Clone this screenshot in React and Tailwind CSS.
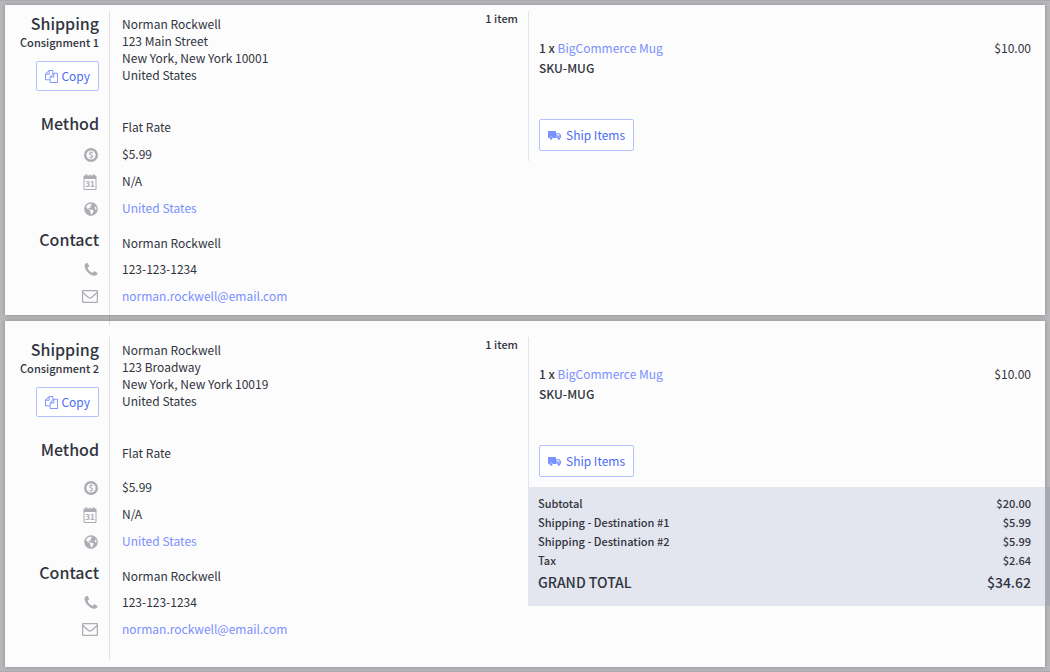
import React from "react";
import { FaGlobeAmericas } from "react-icons/fa";

function CopyIcon() {
  return (
    <svg viewBox="0 0 1792 1792" className="size-[13px] shrink-0 fill-[#8296ff]" aria-hidden="true">
      <path d="M1696 384q40 0 68 28t28 68v1216q0 40-28 68t-68 28h-960q-40 0-68-28t-28-68v-288h-544q-40 0-68-28t-28-68v-672q0-40 20-88t48-76l408-408q28-28 76-48t88-20h416q40 0 68 28t28 68v328q68-40 128-40h416zm-544 213l-299 299h299v-299zm-640-384l-299 299h299v-299zm196 647l316-316v-416h-384v416q0 40-28 68t-68 28h-416v640h512v-256q0-40 20-88t48-76zm956 804v-1152h-384v416q0 40-28 68t-68 28h-416v640h896z" />
    </svg>
  );
}

function TruckIcon() {
  return (
    <svg viewBox="0 0 13 9" className="h-[9px] w-[13px] shrink-0 fill-[#7b91ff]" aria-hidden="true">
      <path d="M0 .6Q0 0 .6 0H7.4Q8 0 8 .6V7H4.6a1.5 1.5 0 0 0-3 0H.6Q0 7 0 6.4Z" />
      <path fillRule="evenodd" d="M8.3 2h2.5q.4 0 .7.3l1.2 1.5q.3.3.3.7V7h-.6a1.5 1.5 0 0 0-3 0H8.3ZM9.3 2.8v1.7h2.6l-1.2-1.7Z" />
      <circle cx="3.1" cy="7.4" r="1.3" />
      <circle cx="10.9" cy="7.4" r="1.3" />
    </svg>
  );
}

function CoinIcon() {
  return (
    <svg viewBox="0 0 14 14" className="size-[14px]" aria-hidden="true">
      <circle cx="7" cy="7" r="5.8" fill="none" stroke="currentColor" strokeWidth="2.4" />
      <text x="7" y="10" textAnchor="middle" fontSize="8" fontWeight="700" fill="currentColor">$</text>
    </svg>
  );
}

function CalendarIcon() {
  return (
    <svg viewBox="0 0 14 16" className="mr-px h-4 w-[14px]" aria-hidden="true">
      <path fill="currentColor" fillRule="evenodd" d="M1.5 1.5H2.600V.3H4.200V1.500H6.200V.8H7.800V1.500H9.800V.3H11.400V1.500H12.500Q13.500 1.500 13.500 2.500V15Q13.500 16 12.500 16H1.500Q.5 16 .5 15V2.500Q.5 1.500 1.500 1.500ZM1.500 5V15H12.500V5Z" />
      <text x="7" y="13" textAnchor="middle" fontSize="8" fontWeight="700" fill="currentColor">31</text>
    </svg>
  );
}

function PhoneIcon() {
  return (
    <svg viewBox="128 128 1536 1536" className="size-[14px] fill-current" aria-hidden="true">
      <path d="M1600 1240q0 27-10 70.5t-21 68.5q-21 50-122 106-94 51-186 51-27 0-53-3.5t-57.5-12.5-47-14.5-55.5-20.5-49-18q-98-35-175-83-127-79-264-216t-216-264q-48-77-83-175-3-9-18-49t-20.5-55.5-14.5-47-12.5-57.5-3.500-53q0-92 51-186 56-101 106-122 25-11 68.500-21t70.500-10q14 0 21 3 18 6 53 76 11 19 30 54t35 63.500 31 53.500q3 4 17.500 25t21.500 35.500 7 28.500q0 20-28.500 50t-62 55-62 53-28.500 46q0 9 5 22.500t8.500 20.500 14 24 11.500 19q76 137 174 235t235 174q2 1 19 11.500t24 14 20.500 8.500 22.500 5q18 0 46-28.500t53-62 55-62 50-28.500q14 0 28.500 7t35.500 21.500 25 17.500q25 15 53.500 31t63.500 35 54 30q70 35 76 53 3 7 3 21z" />
    </svg>
  );
}

function MailIcon() {
  return (
    <svg viewBox="0 0 16 13" className="h-[13px] w-4" fill="none" stroke="currentColor" strokeWidth="1.3" aria-hidden="true">
      <rect x=".6" y=".6" width="14.800" height="11.800" rx=".8" />
      <path d="M.8 2.400 6.500 7.400Q8 8.600 9.500 7.400L15.200 2.400" />
    </svg>
  );
}

function Row({ label, labelClass = "pr-[10px]", className = "", children }) {
  return (
    <div className={"flex " + className}>
      <div className={"flex w-[105px] shrink-0 justify-end border-r border-black/10 " + labelClass}>
        {label}
      </div>
      <div className="min-w-0 flex-1 pl-3">{children}</div>
    </div>
  );
}

function Detail({ icon, children }) {
  return (
    <Row className="h-[27px] leading-[25px]" labelClass="items-center pr-[11px] text-[#acacb3]" label={icon}>
      {children}
    </Row>
  );
}

function Heading({ children }) {
  return <h2 className="text-[16px] leading-6 font-medium">{children}</h2>;
}

function ActionButton({ icon, className, children }) {
  return (
    <button type="button" className={"flex items-center rounded-xs border border-[#b3c1ff] bg-white px-2 text-[12px] text-[#4b6bf5] " + className}>
      {icon}
      {children}
    </button>
  );
}

function Consignment({ number, street, city, methodClass, className = "", tailClass, totals }) {
  return (
    <section className={"grid grid-cols-[523fr_517fr] bg-[#fcfcfc] shadow-[0_0_4px_rgba(0,0,0,0.25)] " + className}>
      <div>
        <Row
          className="h-[99px]"
          labelClass="flex-col items-end justify-start! pr-[10px]"
          label={
            <>
              <Heading>Shipping</Heading>
              <h3 className="text-[11px] leading-[15px] font-medium">Consignment {number}</h3>
              <ActionButton icon={<CopyIcon />} className="mt-[11px] h-[30px] gap-[3px]">Copy</ActionButton>
            </>
          }
        >
          <div className="flex justify-between pr-[10px]">
            <address className="pt-1 leading-[17px] not-italic">
              Norman Rockwell<br />
              {street}<br />
              {city}<br />
              United States
            </address>
            <p className="text-[11px] leading-[15px] font-medium">1 item</p>
          </div>
        </Row>
        <Row className={methodClass} labelClass="pt-px pr-[10px]" label={<Heading>Method</Heading>}>
          <p className="pt-[7px] leading-5">Flat Rate</p>
        </Row>
        <Detail icon={<CoinIcon />}>$5.99</Detail>
        <Detail icon={<CalendarIcon />}>N/A</Detail>
        <Detail icon={<FaGlobeAmericas className="size-[14px]" />}>
          <a href="#country" className="text-[#7b8fff]">United States</a>
        </Detail>
        <Row className="h-[34px]" labelClass="pt-[5px] pr-[10px]" label={<Heading>Contact</Heading>}>
          <p className="pt-[11px] leading-5">Norman Rockwell</p>
        </Row>
        <Detail icon={<PhoneIcon />}>123-123-1234</Detail>
        <Detail icon={<MailIcon />}>
          <a href="mailto:norman.rockwell@email.com" className="text-[#7b8fff]">norman.rockwell@email.com</a>
        </Detail>
        <Row className={tailClass} />
      </div>
      <div>
        <div className="h-[150px] border-l border-[#e1e4f0] pt-[27px] pr-[14px] pl-[10px]">
          <div className="flex justify-between leading-5">
            <p><span className="font-medium">1 x</span> <a href="#mug" className="text-[#7b8fff]">BigCommerce Mug</a></p>
            <p>$10.00</p>
          </div>
          <p className="leading-5 font-medium">SKU-MUG</p>
          <ActionButton icon={<TruckIcon />} className="mt-[41px] h-8 gap-[5px]">Ship Items</ActionButton>
        </div>
        {totals}
      </div>
    </section>
  );
}

const charges = [
  ["Subtotal", "$20.00"],
  ["Shipping - Destination #1", "$5.99"],
  ["Shipping - Destination #2", "$5.99"],
  ["Tax", "$2.64"],
];

function Totals() {
  return (
    <div className="-mr-[5px] border-r-[5px] border-[#a7a9b0] bg-[#e3e6ee] pt-[7px] pr-[14px] pb-3 pl-[10px]">
      <table className="w-full text-[11px] leading-[19px] font-medium">
        <tbody>
          {charges.map(([name, amount]) => (
            <tr key={name}>
              <th scope="row" className="p-0 text-left font-medium">{name}</th>
              <td className="p-0 text-right">{amount}</td>
            </tr>
          ))}
          <tr className="text-[14px] leading-6">
            <th scope="row" className="p-0 text-left font-medium">GRAND TOTAL</th>
            <td className="p-0 text-right">$34.62</td>
          </tr>
        </tbody>
      </table>
    </div>
  );
}

export default function App() {
  return (
    <main className="min-h-screen overflow-x-hidden border-y border-[#a9a9b0] bg-[#b8b8ba] px-[5px] py-1 font-['Noto_Sans_CJK_JP',sans-serif] text-[12px] text-[#313440]">
      <div className="flex flex-col gap-[6px]">
        <Consignment number={1} street="123 Main Street" city="New York, New York 10001" methodClass="h-[31px]" tailClass="-mb-[11px] h-4" className="relative z-10 pt-[6px]" />
        <Consignment number={2} street="123 Broadway" city="New York, New York 10019" methodClass="h-[38px]" tailClass="h-[17px]" className="pt-4 pb-[7px]" totals={<Totals />} />
      </div>
    </main>
  );
}
